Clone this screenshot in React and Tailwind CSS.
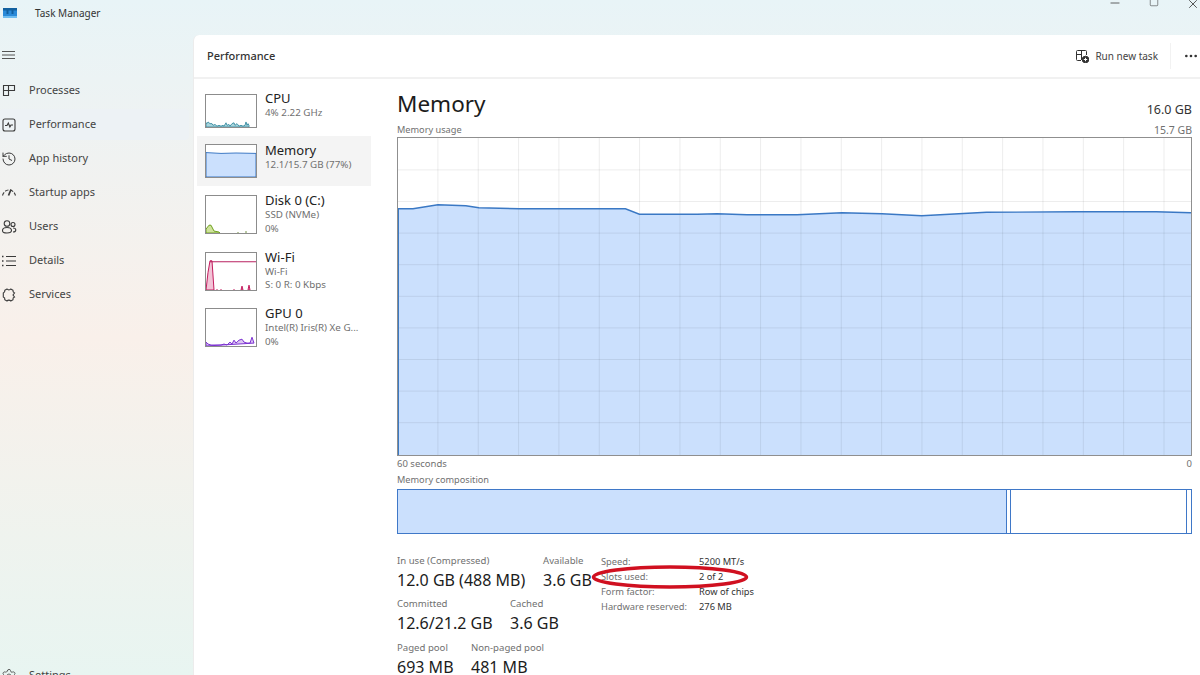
import React from "react";
import { History, Minus, Settings, Square, X, MoreHorizontal } from "lucide-react";

const Ico = ({ children }) => (
  <svg width="16" height="16" viewBox="0 0 16 16" fill="none" stroke="#3a3a3a" strokeWidth="1.1">
    {children}
  </svg>
);

const navItems = [
  {
    label: "Processes",
    icon: (
      <Ico>
        <path d="M2.500 2.500h5v5h-5zM7.500 2.500h6v5h-6zM2.500 7.500h5v5h-5z" />
      </Ico>
    ),
  },
  {
    label: "Performance",
    active: true,
    icon: (
      <Ico>
        <rect x="2" y="2" width="12" height="12" rx="2" />
        <path d="M4 8.500h2l1.300-2.500 1.600 4 1.100-2h2" />
      </Ico>
    ),
  },
  { label: "App history", icon: <History size={16} strokeWidth={1.5} color="#3a3a3a" /> },
  {
    label: "Startup apps",
    icon: (
      <Ico>
        <path d="M1.500 10.500C2.500 7 5 5 8 5s5.500 2 6.500 5.500" strokeDasharray="3.500 1.500" />
        <path d="M7.500 10.500 10 4.500" strokeWidth="1.700" />
      </Ico>
    ),
  },
  {
    label: "Users",
    icon: (
      <Ico>
        <circle cx="6" cy="4.500" r="2.800" />
        <circle cx="12" cy="5.500" r="2" />
        <path d="M1.500 11.500c0-2 1.500-3 4.500-3s4.500 1 4.500 3-1.500 2.500-4.500 2.500-4.500-.5-4.500-2.500zM12 9c1.800 0 2.800.8 2.800 2s-1 2-2.800 2" />
      </Ico>
    ),
  },
  {
    label: "Details",
    icon: (
      <Ico>
        <path d="M5 3.500h10M5 8h10M5 12.500h10" />
        <path d="M1 3.500h1.500M1 8h1.500M1 12.500h1.500" strokeWidth="1.500" />
      </Ico>
    ),
  },
  {
    label: "Services",
    icon: (
      <Ico>
        <path d="M6 2c.8 1.200 3 1.200 3.800 0l2.200 1.200c-.3 1.300.3 2.300 1.500 2.800l-1.500 2 1.500 2c-1.200.5-1.800 1.500-1.500 2.800L9.800 14c-.8-1.200-3-1.200-3.800 0l-2.200-1.200c.3-1.300-.3-2.300-1.500-2.800V6c1.200-.5 1.800-1.500 1.500-2.800z" />
      </Ico>
    ),
  },
];

const Thumb = ({ h, children }) => (
  <div className={`w-[52px] shrink-0 border border-[#8c8c8c] bg-white ${h}`}>
    <svg viewBox="0 0 50 38" preserveAspectRatio="none" className="block w-full h-full">
      {children}
    </svg>
  </div>
);

const Card = ({ title, lines, active, h, thumbH, textShift, children }) => (
  <div className={`flex items-center gap-2 pl-2 ${h} ${active ? "bg-[#f4f4f4]" : ""}`}>
    <Thumb h={thumbH}>{children}</Thumb>
    <div className={`flex flex-col ${textShift}`}>
      <div className="text-[13px] leading-[16px] text-[#222]">{title}</div>
      {lines.map((l) => (
        <div key={l} className="text-[9.8px] leading-[13.500px] text-[#707070] whitespace-nowrap">
          {l}
        </div>
      ))}
    </div>
  </div>
);

const memPoints =
  "0,71 15,71 40,67 68,68 81,70 122,71 228,71 242,76.500 300,76.500 320,76 350,77 400,77 445,75 485,76 525,78 590,74.500 680,74 760,74 795,75";

const Stat = ({ label, value, w }) => (
  <div className={w}>
    <div className="text-[9.600px] leading-[14px] text-[#707070] whitespace-nowrap">{label}</div>
    <div className="text-[16px] leading-[24px] text-[#1c1c1c] whitespace-nowrap">{value}</div>
  </div>
);

const specs = [
  ["Speed:", "5200 MT/s"],
  ["Slots used:", "2 of 2"],
  ["Form factor:", "Row of chips"],
  ["Hardware reserved:", "276 MB"],
];

export default function App() {
  return (
    <div
      className="flex flex-col h-[675px] overflow-hidden bg-[linear-gradient(180deg,#e8f4f7_0%,#f9f0ea_50%,#e8f5f1_100%)]"
      style={{ fontFamily: '"Noto Sans", "Open Sans", sans-serif' }}
    >
      <div className="flex items-start h-[35px] shrink-0">
        <div className="flex items-center h-[26px]">
          <svg width="14" height="10" viewBox="0 0 14 10" className="ml-[3px]">
            <rect width="14" height="10" fill="#2a8ad8" />
            <path d="M0 0h14v2.500H0z" fill="#12609f" />
            <path d="M3.500 2h2v4h-2zM8.500 2h2v4h-2z" fill="#12609f" />
            <path d="M0 8h14v2H0z" fill="#6fbdf0" />
          </svg>
          <span className="ml-[18px] text-[10px] text-[#333]">Task Manager</span>
        </div>
        <div className="ml-auto flex items-start -mt-[4px]">
          <Minus size={14} strokeWidth={1.3} color="#333" />
          <Square size={10} strokeWidth={1.3} color="#333" className="ml-[27px] mt-[1px]" />
          <X size={14} strokeWidth={1.4} color="#333" className="ml-[27px] mt-[1px]" />
        </div>
      </div>

      <div className="flex flex-1 min-h-0">
        <div className="flex flex-col w-[193px] shrink-0 pr-[4px]">
          <div className="flex items-center h-[40px] pb-[1px] pl-[1px]">
            <svg width="15" height="12" viewBox="0 0 15 12" stroke="#555" strokeWidth="1">
              <path d="M1 2.500h13M1 6h13M1 9.500h13" />
            </svg>
          </div>
          {navItems.map((n) => (
            <div
              key={n.label}
              className={`flex items-center h-[31px] mb-[3px] pl-[1px] rounded-[4px] ${n.active ? "bg-[#edf2f5]" : ""}`}
            >
              {n.icon}
              <span className="ml-3 text-[11px] text-[#444]">{n.label}</span>
            </div>
          ))}
          <div className="flex items-center h-[31px] mt-auto -mb-[16px] pl-[1px]">
            <Settings size={16} strokeWidth={1.2} color="#444" />
            <span className="ml-3 text-[11px] text-[#444]">Settings</span>
          </div>
        </div>

        <div className="flex flex-col flex-1 min-w-0 bg-white rounded-tl-[6px] border-l border-[#ececec]">
          <div className="flex items-center h-[44px] shrink-0 border-b-2 border-[#f1f1f1] pl-[13px]">
            <span className="text-[11px] font-medium text-[#333]">Performance</span>
            <div className="ml-auto flex items-center">
              <svg width="14" height="14" viewBox="0 0 14 14" fill="none" stroke="#333" strokeWidth="1">
                <path d="M6 11.500H2.500a1 1 0 0 1-1-1v-8a1 1 0 0 1 1-1h8a1 1 0 0 1 1 1V6M1.500 5.500h5.500M6.500 1.500V11" />
                <circle cx="10.500" cy="10.500" r="3.300" fill="#333" />
                <path d="M10.500 8.800v3.400M8.800 10.500h3.400" stroke="#fff" />
              </svg>
              <span className="ml-[6px] text-[10px] text-[#444]">Run new task</span>
              <div className="w-px h-[26px] bg-[#f2f2f2] ml-3" />
              <MoreHorizontal size={16} strokeWidth={2} color="#333" className="ml-[12px] mr-[1px]" />
            </div>
          </div>

          <div className="flex flex-1 min-h-0">
            <div className="w-[174px] shrink-0 ml-[3px] pt-[6px]">
              <Card title="CPU" lines={["4%  2.22 GHz"]} h="h-[51px]" thumbH="h-[34px]" textShift="mb-[11px]">
                <path d="M0 38V33l1 1 1-2 2 2 2 0 1 2 2-1 2 2 2-1 2 1 2-1 1 1 2-4 1 3 2-1 1 2 2-3 2-1 1 3 2-2 2 3 2-1 2 1 2-1 1-4 1 4 1-2 1 2V38z" fill="#a8d4dc" stroke="#3d8fa3" strokeWidth="1" />
              </Card>
              <Card title="Memory" lines={["12.1/15.7 GB (77%)"]} active h="h-[50px]" thumbH="h-[34px]" textShift="mb-[8px]">
                <path d="M0 9 L15 10 L30 9.500 L50 10 V38 H0z" fill="#cbe0fd" stroke="#2f6fc0" strokeWidth="1" />
              </Card>
              <Card title="Disk 0 (C:)" lines={["SSD (NVMe)", "0%"]} h="h-[57px]" thumbH="h-[39px]" textShift="mb-[2px]">
                <path d="M0 38V34l3-4 2 0 3 6 5 1 1 1z" fill="#cfe39a" stroke="#6f9f1f" strokeWidth="1" />
                <path d="M32 38v-1M40 38v-2" stroke="#6f8f3f" strokeWidth="1" />
              </Card>
              <Card title="Wi-Fi" lines={["Wi-Fi", "S: 0  R: 0 Kbps"]} h="h-[56px]" thumbH="h-[39px]" textShift="mb-[2px]">
                <path d="M0 38 L2 20 L4 8 L6 8 L8 38z" fill="#f2c3d6" stroke="#c2185b" strokeWidth="1" />
                <path d="M11 38v-1M15 38v-1M28 38v-1M35 38l1-4 1 4zM42 38l1-5 1 5z" fill="#f2c3d6" stroke="#c2185b" strokeWidth="1" />
                <path d="M4 9H50" stroke="#b81e5e" strokeWidth="1" />
              </Card>
              <Card title="GPU 0" lines={["Intel(R) Iris(R) Xe G...", "0%"]} h="h-[57px]" thumbH="h-[39px]" textShift="mb-[2px]">
                <path d="M0 38V34l2 2 3 1 10 0 3-1 3 1 3-3 2 2 2-4 2 3 3-3 3-1 2 3 3 1 3 0 2-6 2 6z" fill="#dcc6f2" stroke="#7a2fd0" strokeWidth="1" />
              </Card>
            </div>

            <div className="flex-1 min-w-0 pl-[26px] pr-[8px]">
              <div className="flex items-end justify-between h-[41px]">
                <span className="text-[22.500px] leading-[32px] text-[#1c1c1c]">Memory</span>
                <span className="text-[12.500px] leading-[22px] text-[#333] -mb-[1px]">16.0 GB</span>
              </div>
              <div className="flex justify-between h-[14px] mt-[3px] text-[9.200px] leading-[14px] text-[#707070]">
                <span>Memory usage</span>
                <span className="text-[10.500px]">15.7 GB</span>
              </div>

              <div className="h-[319px] border border-[#8f8f8f] bg-white">
                <svg viewBox="0 0 795 318" preserveAspectRatio="none" className="block w-full h-full">
                  <polygon points={`${memPoints} 795,318 0,318`} fill="#cbe0fd" />
                  {Array.from({ length: 19 }, (_, i) => (
                    <line key={i} x1={40 + 40.44 * i} x2={40 + 40.44 * i} y1="0" y2="318" stroke="#000" strokeOpacity="0.08" />
                  ))}
                  {Array.from({ length: 9 }, (_, i) => (
                    <line key={i} y1={32 + 31.7 * i} y2={32 + 31.7 * i} x1="0" x2="795" stroke="#000" strokeOpacity="0.08" />
                  ))}
                  <polyline points={memPoints} fill="none" stroke="#3a78c4" strokeWidth="1.400" />
                  <line x1="0.500" x2="0.500" y1="71" y2="318" stroke="#3a78c4" />
                </svg>
              </div>
              <div className="flex justify-between h-[15px] text-[9.500px] leading-[15px] text-[#707070]">
                <span>60 seconds</span>
                <span>0</span>
              </div>
              <div className="h-[16px] mt-[1px] text-[9.200px] leading-[16px] text-[#707070]">Memory composition</div>

              <div className="flex h-[45px] mt-[1px] border border-[#3f78c8]">
                <div className="w-[609px] bg-[#cbe0fd] border-r border-[#3f78c8]" />
                <div className="w-[4px] border-r border-[#3f78c8]" />
                <div className="flex-1 border-r border-[#3f78c8]" />
                <div className="w-[4px]" />
              </div>

              <div className="flex mt-[20px]">
                <div className="w-[204px] shrink-0">
                  <div className="flex">
                    <Stat label="In use (Compressed)" value="12.0 GB (488 MB)" w="w-[146px]" />
                    <Stat label="Available" value="3.6 GB" />
                  </div>
                  <div className="flex mt-[5px]">
                    <Stat label="Committed" value="12.6/21.2 GB" w="w-[113px]" />
                    <Stat label="Cached" value="3.6 GB" />
                  </div>
                  <div className="flex mt-[6px]">
                    <Stat label="Paged pool" value="693 MB" w="w-[74px]" />
                    <Stat label="Non-paged pool" value="481 MB" />
                  </div>
                </div>
                <div className="relative">
                  {specs.map(([k, v]) => (
                    <div key={k} className="flex h-[15px] text-[9.300px] leading-[15px] whitespace-nowrap">
                      <span className="w-[98px] text-[#707070]">{k}</span>
                      <span className="text-[#333]">{v}</span>
                    </div>
                  ))}
                  <svg width="160" height="28" viewBox="0 0 160 28" fill="none" className="absolute left-[-11px] top-[9px]">
                    <ellipse cx="80" cy="14" rx="76.500" ry="10" stroke="#d01020" strokeWidth="3.500" />
                  </svg>
                </div>
              </div>
            </div>
          </div>
        </div>
      </div>
    </div>
  );
}
